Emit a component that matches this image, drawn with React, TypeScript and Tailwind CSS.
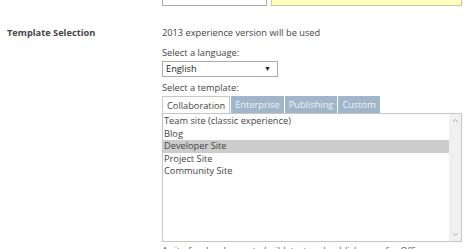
import { ChevronDown } from "lucide-react";

const items = [
  "Team site (classic experience)",
  "Blog",
  "Developer Site",
  "Project Site",
  "Community Site",
];

const tabs = ["Collaboration", "Enterprise", "Publishing", "Custom"];

export default function App() {
  return (
    <div className="h-[249px] w-[474px] overflow-hidden bg-white font-['Open_Sans',sans-serif] text-[9.25px] text-[#444]">
      {/* URL inputs, cut off at the top */}
      <div className="-mt-[16px] flex gap-[4px] pl-[162px]">
        <div className="h-[22px] w-[105px] border border-[#ababab] bg-white px-[3px] leading-[20px]">/sites/</div>
        <div className="h-[22px] w-[191px] border border-[#c8c8a0] bg-[#ffffc0] px-[3px] leading-[20px]">dev</div>
      </div>

      <div className="mt-[20px] flex">
        <div className="w-[162px] pl-[7px] font-bold leading-[14px]">Template Selection</div>
        <div className="flex flex-col">
          <div className="leading-[14px]">2013 experience version will be used</div>

          <div className="mt-[6px] leading-[14px]">Select a language:</div>
          <div className="mt-[1px] flex h-[16px] w-[116px] items-center justify-between border border-[#ababab] pl-[3px] pr-[6px] text-[#222]">
            <span>English</span>
            <span className="text-[7px]">▼</span>
          </div>

          <div className="mt-[4px] leading-[14px]">Select a template:</div>
          <div className="mt-[1px] flex gap-[1px]">
            {tabs.map((t, i) => (
              <div
                key={t}
                className={
                  i === 0
                    ? "h-[18px] border border-b-0 border-[#c6c6c6] bg-white px-[4px] leading-[17px] text-[#444]"
                    : "h-[17px] bg-[#a0b6ca] px-[4px] leading-[17px] text-[#eef3f7]"
                }
              >
                {t}
              </div>
            ))}
          </div>

          <div className="-mt-[1px] flex h-[129px] w-[300px] border border-[#c6c6c6]">
            <div className="flex flex-1 flex-col pt-[1px]">
              {items.map((it) => (
                <div
                  key={it}
                  className={
                    "h-[12.5px] pl-[1px] leading-[12.5px] " + (it === "Developer Site" ? "bg-[#cccccc]" : "")
                  }
                >
                  {it}
                </div>
              ))}
            </div>
            <div className="flex w-[12px] flex-col justify-between bg-[#f0f0f0] py-[3px] text-[#999]">
              <ChevronDown className="mx-auto size-[7px] rotate-180" strokeWidth={3} />
              <ChevronDown className="mx-auto size-[7px]" strokeWidth={3} />
            </div>
          </div>

          <div className="mt-[2px] leading-[14px] text-[#555]">
            A site for developers to build, test and publish apps for Office
          </div>
        </div>
      </div>
    </div>
  );
}
